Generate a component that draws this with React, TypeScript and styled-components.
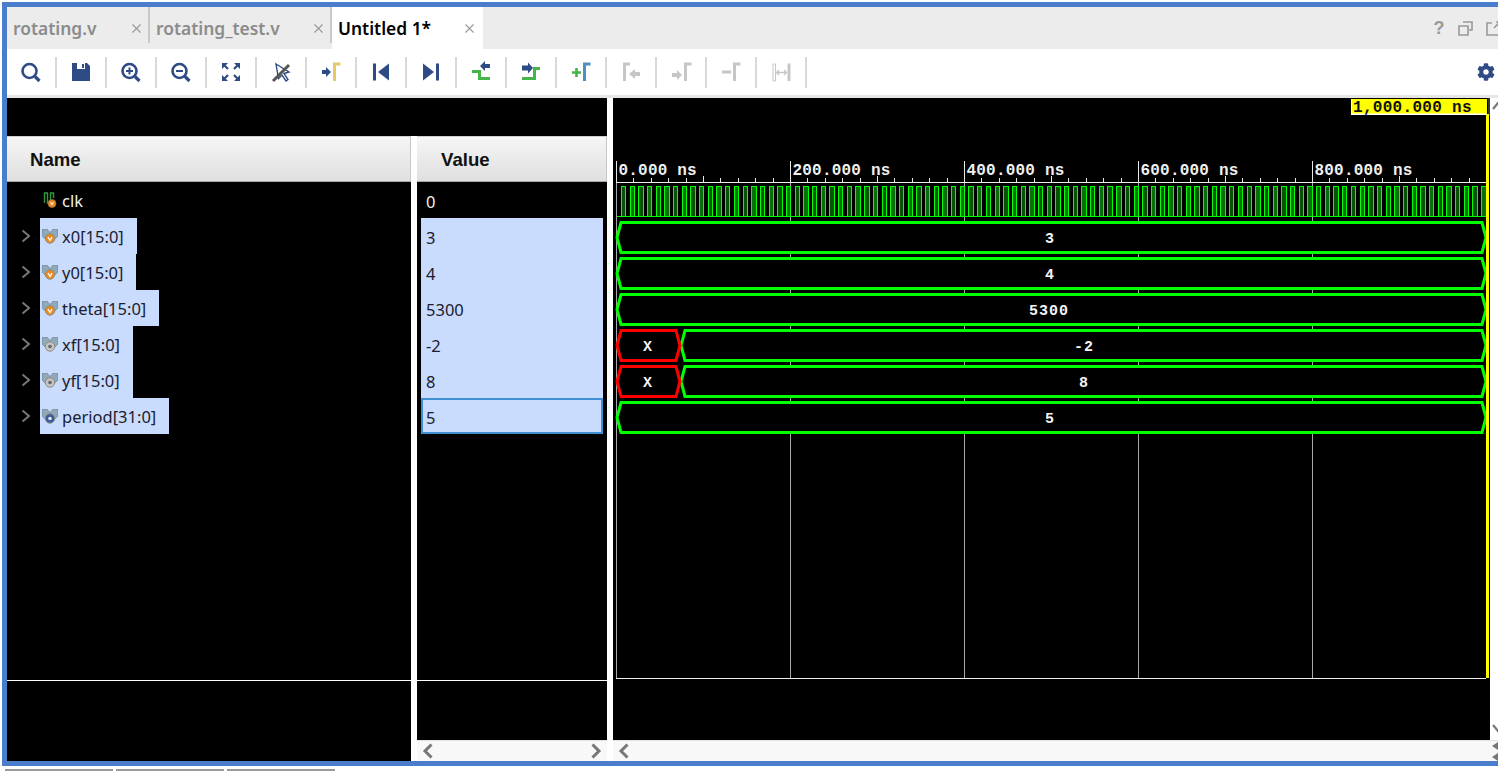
import React from "react";
import styled, { createGlobalStyle } from "styled-components";
import { X } from "lucide-react";
import { FaCog } from "react-icons/fa";

const Global = createGlobalStyle`
  html, body { margin: 0; padding: 0; background: #fff; overflow: hidden; }
  * { box-sizing: border-box; }
`;
const UI = `"Noto Sans", "Liberation Sans", sans-serif`;
const BLUE = "#2f4b85";
const GREEN = "#44b549";
const OFF = "#c6c6c6";

const Page = styled.div`width: 1498px; height: 771px; overflow: hidden; padding: 2px 0 0 2px; font-family: ${UI};`;
const Window = styled.div`
  width: 1496px; height: 764px;
  border-top: 5px solid #4a7ecb; border-bottom: 5px solid #4a7ecb; border-left: 5px solid #4a7ecb;
  display: flex; flex-direction: column; background: #fff;
`;
const TabBar = styled.div`height: 42px; flex: none; background: #ececec; display: flex; align-items: flex-start;`;
const Tab = styled.div<{ $w: number; $active?: boolean }>`
  width: ${p => p.$w}px; height: 42px; display: flex; align-items: center; justify-content: space-between;
  padding: 0 ${p => (p.$active ? 6 : 4)}px 0 6px; background: ${p => (p.$active ? "#fff" : "transparent")};
  color: ${p => (p.$active ? "#000" : "#8b8b8b")}; font-size: 17.4px; font-weight: 600;
`;
const TabSep = styled.div`width: 2px; height: 36px; background: #c9c9c9;`;
const WinTools = styled.div`margin-left: auto; height: 42px; display: flex; align-items: center; gap: 13px; width: 65px; overflow: hidden; padding-top: 1px; flex: none;`;
const Help = styled.span`font: bold 18px "Liberation Sans", sans-serif; color: #999; width: 12px; text-align: center; flex: none;`;

const Toolbar = styled.div`height: 46px; flex: none; display: flex; align-items: center;`;
const ToolBtn = styled.div`width: 48px; height: 46px; display: flex; align-items: center; justify-content: center;`;
const ToolSep = styled.div`width: 2px; height: 31px; background: #d9d9d9; margin-top: 1px;`;
const Gear = styled.div`margin-left: auto; width: 24px; display: flex; justify-content: center; color: ${BLUE};`;
const ToolRule = styled.div`height: 3px; flex: none; background: #e6e6e6;`;

const Panels = styled.div`flex: 1; display: flex; min-height: 0; background: #fff;`;
const Col = styled.div<{ $w: number }>`width: ${p => p.$w}px; flex: none; display: flex; flex-direction: column;`;
const TopBand = styled.div`height: 38px; flex: none; background: #000;`;
const Gutter = styled.div`width: 6px; flex: none; display: flex; flex-direction: column; background: #fff;`;
const Gap = styled.div`width: 6px; flex: none; background: #fff;`;
const Header = styled.div<{ $pad: number }>`
  height: 46px; flex: none; padding: 2px 0 0 ${p => p.$pad}px; display: flex; align-items: center;
  font: bold 18.6px "Liberation Sans", sans-serif; color: #111;
  background: linear-gradient(#f6f6f6, #dfdfdf);
  border-top: 1px solid #cfcfcf; border-bottom: 1px solid #a8a8a8; border-right: 1px solid #c8c8c8;
`;
const Body = styled.div`flex: 1; background: #000; display: flex; flex-direction: column;`;
const Footer = styled.div<{ $h: number }>`height: ${p => p.$h}px; flex: none; background: #000; border-top: 1px solid #fff;`;

const NameRow = styled.div`height: 36px; display: flex; align-items: center;`;
const Expander = styled.div`width: 33px; height: 36px; display: flex; align-items: center; justify-content: flex-end; padding-right: 9px; flex: none; padding-bottom: 1px;`;
const NameCell = styled.div<{ $sel?: boolean }>`
  height: 36px; display: flex; align-items: center; gap: 4px; padding: 0 13px 0 2px;
  background: ${p => (p.$sel ? "#c9dcfd" : "transparent")}; color: ${p => (p.$sel ? "#1b2030" : "#f4efe6")};
  font-size: 16.5px; line-height: 1;
`;
const NameText = styled.span`padding-top: 2px;`;
const ValueRow = styled.div`height: 36px; padding: 0 4px;`;
const ValueCell = styled.div<{ $sel?: boolean; $focus?: boolean }>`
  height: 36px; display: flex; align-items: center; padding: 2px 0 0 ${p => (p.$focus ? 3 : 5)}px; font-size: 16.5px;
  background: ${p => (p.$sel ? "#c9dcfd" : "transparent")}; color: ${p => (p.$sel ? "#1b2030" : "#f4efe6")};
  border: ${p => (p.$focus ? "2px solid #3f8fd2" : "none")};
`;
const ScrollBar = styled.div`
  height: 21px; flex: none; background: #f8f8f8; border-top: 1px solid #e4e4e4;
  display: flex; align-items: center; justify-content: space-between; padding: 0 5px;
`;
const WaveTop = styled.div`flex: 1; display: flex; min-height: 0;`;
const WaveSvg = styled.svg`width: 877px; height: 642px; display: block; flex: none; background: #000;`;
const Rail = styled.div`width: 8px; flex: none; overflow: hidden; display: flex; flex-direction: column; justify-content: space-between; padding: 3px 0 7px 1px;`;
const ArrowStack = styled.div`display: flex; flex-direction: column; gap: 3px; margin-right: -7px;`;
const BottomTabs = styled.div`display: flex; gap: 3px; padding-left: 3px; margin-top: 3px;`;
const BottomTab = styled.div`width: 108px; height: 2px; background: #9a9a9a;`;

const Ico = ({ children }: { children: React.ReactNode }) => (
  <svg width="24" height="24" viewBox="0 0 24 24" fill="none">{children}</svg>
);
const Lens = ({ mark }: { mark?: "plus" | "minus" }) => (
  <Ico>
    <circle cx="10.5" cy="11" r="7" stroke={BLUE} strokeWidth="2.6" />
    <path d="M16 16.5l4.5 4.5" stroke={BLUE} strokeWidth="3.2" />
    {mark && <path d="M7 11h7" stroke={BLUE} strokeWidth="2" />}
    {mark === "plus" && <path d="M10.5 7.5v7" stroke={BLUE} strokeWidth="2" />}
  </Ico>
);
const Bracket = ({ x, color }: { x: number; color: string }) => (
  <path d={`M${x} 21V4H${x + 6}`} stroke={color} strokeWidth="3" />
);

const tools: React.ReactNode[] = [
  <Lens key="s" />,
  <Ico key="save"><path d="M3 3h15l3 3v15H3z" fill={BLUE} /><path d="M8 3h8v6H8z" fill="#fff" /><path d="M13 4h2v4h-2z" fill={BLUE} /></Ico>,
  <Lens key="zi" mark="plus" />,
  <Lens key="zo" mark="minus" />,
  <Ico key="fit">
    <g fill={BLUE}>
      <path d="M3 3h6L3 9z" /><path d="M21 3h-6l6 6z" /><path d="M3 21h6l-6-6z" /><path d="M21 21h-6l6-6z" />
    </g>
    <path d="M5 5l4 4M19 5l-4 4M5 19l4-4M19 19l-4-4" stroke={BLUE} strokeWidth="2.2" />
  </Ico>,
  <Ico key="cur">
    <path d="M7 4l13 8-5 1.5 4 6-2 1.5-4-6-3.5 3.5z" fill="#fff" stroke={BLUE} strokeWidth="1.4" />
    <path d="M4 21L20 5" stroke="#555" strokeWidth="3" />
  </Ico>,
  <Ico key="mk"><path d="M3 10h4V7l5 5-5 5v-3H3z" fill={BLUE} /><Bracket x={15.5} color="#e3c96a" /></Ico>,
  <Ico key="first"><path d="M4 3.5h3v17H4z" fill={BLUE} /><path d="M20 3.5v17L9 12z" fill={BLUE} /></Ico>,
  <Ico key="last"><path d="M17 3.5h3v17h-3z" fill={BLUE} /><path d="M4 3.5v17L15 12z" fill={BLUE} /></Ico>,
  <Ico key="pt"><path d="M3 11.5h7.5V18.5H21" stroke={GREEN} strokeWidth="3" /><path d="M11 6l5-5v3h5v4h-5v3z" fill={BLUE} /></Ico>,
  <Ico key="nt"><path d="M3 18.5h12.5V8.5H21" stroke={GREEN} strokeWidth="3" /><path d="M3 5.5h6V2.5l5 5.5-5 5.5v-3H3z" fill={BLUE} /></Ico>,
  <Ico key="am"><path d="M3 12.5h9M7.5 8v9" stroke={GREEN} strokeWidth="2.6" /><Bracket x={15.5} color="#4d8fc0" /></Ico>,
  <Ico key="pm"><path d="M5.5 21V4H11" stroke={OFF} strokeWidth="3" /><path d="M10 14l6-5v3h5v4h-5v3z" fill={OFF} /></Ico>,
  <Ico key="nm"><path d="M3 13h5v-3l5 5-5 5v-3H3z" fill={OFF} /><Bracket x={16.5} color={OFF} /></Ico>,
  <Ico key="rm"><path d="M3 12h9" stroke={OFF} strokeWidth="3" /><Bracket x={15.5} color={OFF} /></Ico>,
  <Ico key="sw">
    <path d="M4 4h2.5v17H4z" stroke={OFF} strokeWidth="1" />
    <path d="M18.5 3.5h3V21h-3z" fill={OFF} />
    <path d="M8 12.5h9M10 10l-2.5 2.5L10 15M15 10l2.5 2.5L15 15" stroke={OFF} strokeWidth="1.4" />
  </Ico>,
];

type Kind = "orange" | "grey" | "navy";
const kindFill: Record<Kind, string> = { orange: "#ee8a1d", grey: "#c4c4c4", navy: "#3b5b9b" };
const Medal = ({ kind }: { kind: Kind }) => (
  <svg width="16" height="15" viewBox="0 0 16 15" style={{ flex: "none" }}>
    <path d="M0 0h5l3 3.5L11 0h5v7l-3 3H3L0 7z" fill="#8fa9b8" stroke="#6a8290" strokeWidth=".6" />
    <circle cx="8" cy="9.5" r="4.7" fill={kindFill[kind]} stroke="#8b8b7c" strokeWidth="1" />
    {kind === "orange"
      ? <path d="M6 8l2 3.5 2-3.5" stroke="#fff" strokeWidth="1.3" fill="none" />
      : <circle cx="8" cy="9.5" r="1.8" fill={kind === "grey" ? "#666" : "#dfe6f5"} />}
  </svg>
);
const ClkIcon = () => (
  <svg width="16" height="17" viewBox="0 0 16 17" style={{ flex: "none" }}>
    <path d="M2.5 11V1h3v10h3V1h3v5" stroke="#2e9a3a" strokeWidth="1.4" fill="none" />
    <circle cx="10" cy="11.5" r="4" fill="#ee8a1d" stroke="#8b6a3c" strokeWidth=".8" />
    <path d="M8.6 10.2l1.4 2.6 1.4-2.6" stroke="#fff" strokeWidth="1" fill="none" />
  </svg>
);

const signals: { name: string; value: string; kind: Kind }[] = [
  { name: "x0[15:0]", value: "3", kind: "orange" },
  { name: "y0[15:0]", value: "4", kind: "orange" },
  { name: "theta[15:0]", value: "5300", kind: "orange" },
  { name: "xf[15:0]", value: "-2", kind: "grey" },
  { name: "yf[15:0]", value: "8", kind: "grey" },
  { name: "period[31:0]", value: "5", kind: "navy" },
];

const RowChevron = () => (
  <svg width="10" height="14" viewBox="0 0 10 14" fill="none"><path d="M1.5 1.5L8 7l-6.5 5.5" stroke="#777" strokeWidth="2" /></svg>
);
const ScrollChevron = ({ dir }: { dir: "left" | "right" }) => (
  <svg width="12" height="16" viewBox="0 0 12 16" fill="none">
    <path d={dir === "left" ? "M9.5 1.5L3 8l6.5 6.5" : "M2.5 1.5L9 8l-6.5 6.5"} stroke="#777" strokeWidth="3" />
  </svg>
);

const T0 = 616, END = 1486, PX = 0.87;
const MONO = `"Liberation Mono", monospace`;
const busPath = (x1: number, x2: number, top: number) =>
  `M${x1 + 5} ${top}H${x2 - 4}L${x2} ${top + 15}L${x2 - 4} ${top + 30}H${x1 + 5}L${x1 + 1} ${top + 15}Z`;

const pulses = Array.from({ length: 100 }, (_, i) => {
  const a = Math.round(616.5 + 4.35 + i * 8.69);
  const b = Math.round(616.5 + 8.69 + i * 8.69);
  return { a, b };
});

const Wave = () => {
  const ticks = Array.from({ length: 50 }, (_, i) => i * 20);
  return (
    <WaveSvg viewBox="613 98 877 642">
      {[0, 200, 400, 600, 800].map(t => {
        const x = Math.round(T0 + t * PX) + 0.5;
        return (
          <g key={t}>
            <path d={`M${x} 183V678`} stroke="#a8a8a8" />
            <path d={`M${x} 161V182`} stroke="#e8e8e8" />
            <text x={x + 2} y={175} fill="#f0f0f0" fontFamily={MONO} fontWeight="bold" fontSize="16" letterSpacing="0.2">{`${t}.000 ns`}</text>
          </g>
        );
      })}
      {ticks.map(t => {
        if (t % 200 === 0) return null;
        const x = Math.round(T0 + t * PX) + 0.5;
        return <path key={t} d={`M${x} ${t % 100 === 0 ? 176 : 178}V182`} stroke="#e8e8e8" />;
      })}
      <path d="M616 182.5H1486" stroke="#eee" />
      <path d="M616 678.5H1486" stroke="#eee" />

      <g shapeRendering="crispEdges">
        <path d={`M617 216.5H${END}`} stroke="#00f000" />
        {pulses.map(({ a, b }, i) => (
          <rect key={i} x={a + 0.5} y={186.5} width={b - a} height={30} fill={i % 2 ? "#087008" : "#055505"} stroke="#00ff00" strokeWidth="1" />
        ))}
      </g>

      {[222.5, 258.5, 294.5].map(t => (
        <path key={t} d={busPath(616, 1486, t)} fill="#000" stroke="#00ff00" strokeWidth="3" />
      ))}
      {[330.5, 366.5].map(t => (
        <g key={t}>
          <path d={busPath(680, 1486, t)} fill="#000" stroke="#00ff00" strokeWidth="3" />
          <path d={busPath(616, 680, t)} fill="#000" stroke="#ff0000" strokeWidth="3" />
        </g>
      ))}
      <path d={busPath(616, 1486, 402.5)} fill="#000" stroke="#00ff00" strokeWidth="3" />

      <g fill="#f4f4f4" fontFamily={MONO} fontWeight="bold" fontSize="15" letterSpacing="1" textAnchor="middle">
        <text x="1050" y="243">3</text>
        <text x="1050" y="279">4</text>
        <text x="1049" y="315">5300</text>
        <text x="648" y="351">X</text>
        <text x="1084" y="351">-2</text>
        <text x="648" y="387">X</text>
        <text x="1084" y="387">8</text>
        <text x="1050" y="423">5</text>
      </g>

      <rect x="1351" y="99" width="136" height="16" fill="#fff" />
      <rect x="1352" y="99" width="135" height="14.5" fill="#ffff00" />
      <text x="1353" y="112" fill="#111" fontFamily={MONO} fontWeight="bold" fontSize="16" letterSpacing="0.3">1,000.000 ns</text>
      <rect x="1488" y="98" width="2" height="18" fill="#333" />
      <rect x="1486" y="114" width="3" height="564" fill="#ffff00" />
    </WaveSvg>
  );
};

export default function App() {
  return (
    <Page>
      <Global />
      <Window>
        <TabBar>
          <Tab $w={141}>rotating.v<X size={15} strokeWidth={1.8} color="#999" /></Tab>
          <TabSep />
          <Tab $w={180}>rotating_test.v<X size={15} strokeWidth={1.8} color="#999" /></Tab>
          <TabSep />
          <Tab $w={151} $active>Untitled 1*<X size={15} strokeWidth={1.8} color="#999" /></Tab>
          <WinTools>
            <Help>?</Help>
            <svg width="15" height="15" viewBox="0 0 15 15" fill="none" style={{ flex: "none" }}>
              <path d="M5 1h9v8h-3M1 5h9v9H1z" stroke="#999" strokeWidth="1.6" />
            </svg>
            <svg width="16" height="15" viewBox="0 0 16 15" fill="none" style={{ flex: "none" }}>
              <path d="M6 2H1v12h12V9M8 7l6-6M10 1h5v5" stroke="#999" strokeWidth="1.6" />
            </svg>
          </WinTools>
        </TabBar>
        <Toolbar>
          {tools.map((t, i) => (
            <React.Fragment key={i}>
              <ToolBtn>{t}</ToolBtn>
              <ToolSep />
            </React.Fragment>
          ))}
          <Gear><FaCog size={18} /></Gear>
        </Toolbar>
        <ToolRule />
        <Panels>
          <Col $w={404}>
            <TopBand />
            <Header $pad={23}>Name</Header>
            <Body>
              <NameRow>
                <Expander />
                <NameCell><ClkIcon /><NameText>clk</NameText></NameCell>
              </NameRow>
              {signals.map(s => (
                <NameRow key={s.name}>
                  <Expander><RowChevron /></Expander>
                  <NameCell $sel><Medal kind={s.kind} /><NameText>{s.name}</NameText></NameCell>
                </NameRow>
              ))}
            </Body>
            <Footer $h={81} />
          </Col>
          <Gutter><TopBand /></Gutter>
          <Col $w={190}>
            <TopBand />
            <Header $pad={24}>Value</Header>
            <Body>
              <ValueRow><ValueCell>0</ValueCell></ValueRow>
              {signals.map((s, i) => (
                <ValueRow key={s.name}>
                  <ValueCell $sel $focus={i === signals.length - 1}>{s.value}</ValueCell>
                </ValueRow>
              ))}
            </Body>
            <Footer $h={60} />
            <ScrollBar><ScrollChevron dir="left" /><ScrollChevron dir="right" /></ScrollBar>
          </Col>
          <Gap />
          <Col $w={885}>
            <WaveTop>
              <Wave />
              <Rail>
                <svg width="14" height="9" viewBox="0 0 14 9" fill="none"><path d="M2 8l5-6 5 6" stroke="#777" strokeWidth="2.2" /></svg>
                <svg width="14" height="9" viewBox="0 0 14 9" fill="none"><path d="M2 1l5 6 5-6" stroke="#777" strokeWidth="2.2" /></svg>
              </Rail>
            </WaveTop>
            <ScrollBar>
              <ScrollChevron dir="left" />
              <ArrowStack>
                <svg width="8" height="8" viewBox="0 0 8 8"><path d="M0 4l6-4v8z" fill="#777" /></svg>
                <svg width="8" height="8" viewBox="0 0 8 8"><path d="M0 4l6-4v8z" fill="#777" /></svg>
              </ArrowStack>
            </ScrollBar>
          </Col>
        </Panels>
      </Window>
      <BottomTabs>
        <BottomTab /><BottomTab /><BottomTab />
      </BottomTabs>
    </Page>
  );
}
